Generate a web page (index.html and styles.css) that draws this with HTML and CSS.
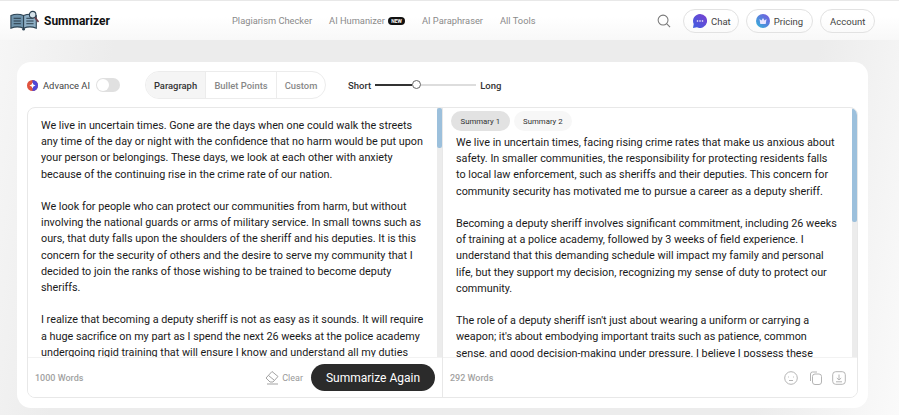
FILE: index.html
```html
<!DOCTYPE html>
<html lang="en">
<head>
  <meta charset="UTF-8" />
  <title>Summarizer</title>
  <link rel="stylesheet" href="styles.css">
</head>
<body>
  <header class="topbar">
    <div class="brand">
      <svg class="brand-logo" width="29" height="22" viewBox="0 0 32 24">
        <path d="M1 6q7-3 14 0v14q-7-3-14 0z" fill="#6f93ab" stroke="#2c4252" stroke-width="1.2"/>
        <path d="M15 6q7-3 14 0v14q-7-3-14 0z" fill="#8fb0c6" stroke="#2c4252" stroke-width="1.2"/>
        <path d="M4 9h8M4 12h8M4 15h8M18 9h8M18 12h8M18 15h8" stroke="#22323e" stroke-width="1"/>
        <circle cx="25" cy="5" r="3.6" fill="#d5e2ea" stroke="#2c4252" stroke-width="1.2"/>
        <path d="M27.500 8l4 5" stroke="#6b3d4a" stroke-width="1.800"/>
        <circle cx="15" cy="21" r="1.500" fill="#2c4252"/>
      </svg>
      <span class="brand-name">Summarizer</span>
    </div>
    <nav class="nav">
      <a>Plagiarism Checker</a>
      <a>AI Humanizer <span class="new-badge">NEW</span></a>
      <a>AI Paraphraser</a>
      <a>All Tools</a>
    </nav>
    <div class="actions">
      <svg class="search" width="14" height="14" viewBox="0 0 15 15" fill="none" stroke="#777" stroke-width="1.100">
        <circle cx="6.500" cy="6.500" r="5.300"/>
        <path d="M10.500 10.500l3.500 3.500"/>
      </svg>
      <button class="pill pill-chat">
        <svg width="14" height="14" viewBox="0 0 14 14">
          <defs>
            <linearGradient id="chatFill" x1="1" y1="0" x2="0" y2="1">
              <stop offset="0" stop-color="#7a3fd0"/>
              <stop offset="1" stop-color="#3f5fe0"/>
            </linearGradient>
          </defs>
          <path d="M7 0a7 7 0 1 1-3 13.300L0 14l.7-4A7 7 0 0 1 7 0z" fill="url(#chatFill)"/>
          <circle cx="4.500" cy="7" r=".8" fill="#fff"/><circle cx="7" cy="7" r=".8" fill="#fff"/><circle cx="9.500" cy="7" r=".8" fill="#fff"/>
        </svg>
        Chat
      </button>
      <button class="pill">
        <svg width="14" height="14" viewBox="0 0 14 14">
          <defs>
            <linearGradient id="priceFill" x1="0" y1="1" x2="1" y2="0">
              <stop offset="0" stop-color="#2fb4d8"/>
              <stop offset="1" stop-color="#7a55e0"/>
            </linearGradient>
          </defs>
          <circle cx="7" cy="7" r="7" fill="url(#priceFill)"/>
          <path d="M3.500 5l2 1.500L7 4l1.500 2.500 2-1.500-.8 5H4.300z" fill="#e9e4ff"/>
        </svg>
        Pricing
      </button>
      <button class="pill">Account</button>
    </div>
  </header>

  <main class="page">
    <section class="card">
      <div class="toolbar">
        <div class="advance">
          <svg width="11" height="11" viewBox="0 0 11 11">
            <circle cx="5.500" cy="5.500" r="5.500" fill="#e0533f"/>
            <path d="M5.500 0a5.500 5.500 0 0 1 0 11z" fill="#4f46d8"/>
            <path d="M5.500 2.500l.9 2.100 2.100.9-2.100.9-.9 2.100-.9-2.100-2.100-.9 2.100-.9z" fill="#fff"/>
          </svg>
          <span>Advance AI</span>
          <span class="toggle"><span class="knob"></span></span>
        </div>
        <div class="modes">
          <span class="mode active">Paragraph</span>
          <span class="mode">Bullet Points</span>
          <span class="mode">Custom</span>
        </div>
        <div class="length">
          <span>Short</span>
          <span class="slider"><span class="slider-fill"></span><span class="slider-knob"></span></span>
          <span>Long</span>
        </div>
      </div>

      <div class="editor">
        <div class="pane pane-left">
          <div class="text">
            <p>We live in uncertain times. Gone are the days when one could walk the streets any time of the day or night with the confidence that no harm would be put upon your person or belongings. These days, we look at each other with anxiety because of the continuing rise in the crime rate of our nation.</p>
            <p>We look for people who can protect our communities from harm, but without involving the national guards or arms of military service. In small towns such as ours, that duty falls upon the shoulders of the sheriff and his deputies. It is this concern for the security of others and the desire to serve my community that I decided to join the ranks of those wishing to be trained to become deputy sheriffs.</p>
            <p>I realize that becoming a deputy sheriff is not as easy as it sounds. It will require a huge sacrifice on my part as I spend the next 26 weeks at the police academy undergoing rigid training that will ensure I know and understand all my duties</p>
          </div>
          <span class="scroll-track"><span class="scroll-thumb thumb-left"></span></span>
          <div class="pane-foot">
            <span class="count">1000 Words</span>
            <span class="clear">
              <svg width="15" height="15" viewBox="0 0 15 15" fill="none" stroke="#999" stroke-width=".9">
                <path d="M1 8l6-6.500 6 5-5 5.500H5z"/>
                <path d="M3.500 5.500l5.500 4.500M2 14h11"/>
              </svg>
              Clear
            </span>
            <button class="summarize">Summarize Again</button>
          </div>
        </div>
        <div class="pane pane-right">
          <div class="tabs">
            <span class="tab tab-on">Summary 1</span>
            <span class="tab">Summary 2</span>
          </div>
          <div class="text text-right">
            <p>We live in uncertain times, facing rising crime rates that make us anxious about safety. In smaller communities, the responsibility for protecting residents falls to local law enforcement, such as sheriffs and their deputies. This concern for community security has motivated me to pursue a career as a deputy sheriff.</p>
            <p>Becoming a deputy sheriff involves significant commitment, including 26 weeks of training at a police academy, followed by 3 weeks of field experience. I understand that this demanding schedule will impact my family and personal life, but they support my decision, recognizing my sense of duty to protect our community.</p>
            <p>The role of a deputy sheriff isn't just about wearing a uniform or carrying a weapon; it's about embodying important traits such as patience, common sense, and good decision-making under pressure. I believe I possess these</p>
          </div>
          <span class="scroll-track"><span class="scroll-thumb thumb-right"></span></span>
          <div class="pane-foot">
            <span class="count">292 Words</span>
            <span class="foot-icons">
              <svg width="14" height="14" viewBox="0 0 14 14" fill="none" stroke="#b4b4b4">
                <circle cx="7" cy="7" r="6.300"/>
                <path d="M4 6h.8M9.200 6h.8M5 9.500h4"/>
              </svg>
              <svg width="14" height="14" viewBox="0 0 14 14" fill="none" stroke="#b4b4b4">
                <path d="M2.500 10V3a2 2 0 0 1 2-2H9"/>
                <rect x="4.500" y="3" width="9" height="10.500" rx="2.500"/>
              </svg>
              <svg width="14" height="14" viewBox="0 0 14 14" fill="none" stroke="#b4b4b4">
                <rect x=".7" y=".7" width="12.600" height="12.600" rx="3"/>
                <path d="M7 3.500v5.500M4.800 7L7 9l2.200-2M4 10.800h6"/>
              </svg>
            </span>
          </div>
        </div>
      </div>
    </section>
  </main>
</body>
</html>
```

FILE: styles.css
```css
* { margin: 0; padding: 0; box-sizing: border-box; }

html, body { height: 100%; }

body {
  background: #fff;
  color: #1c1c1c;
  font-family: Roboto, "Liberation Sans", sans-serif;
  font-size: 10px;
  overflow: hidden;
}

button { font-family: inherit; background: none; cursor: pointer; }

.topbar {
  display: flex;
  align-items: center;
  height: 40px;
  padding-left: 10px;
  padding-top: 1px;
  background: linear-gradient(#fff 40%, #f8f8f8);
  border-top: 1px solid #e8e8e8;
}

.brand { display: flex; align-items: center; gap: 5px; width: 222px; }
.brand-logo { display: block; }
.brand-name { font-size: 12px; font-weight: 700; color: #111; }

.nav { display: flex; gap: 17px; width: 425px; margin-top: -1px; }
.nav a { color: #8a8a8a; font-size: 9.300px; }

.new-badge {
  display: inline-block;
  padding: 0 3px;
  margin-left: 1px;
  background: #111;
  color: #fff;
  border-radius: 6px;
  font-size: 5px;
  line-height: 8px;
  vertical-align: 1px;
  font-weight: 700;
}

.actions { display: flex; align-items: center; gap: 7px; }
.search { margin-right: 5px; }

.pill {
  display: flex;
  align-items: center;
  gap: 4px;
  height: 24px;
  padding: 0 9px;
  border: 1px solid #e2e2e2;
  border-radius: 12px;
  color: #444;
  font-size: 9.500px;
}
.pill-chat { padding-right: 7px; }

.page {
  height: 375px;
  padding: 22px 31px 7px 17px;
  background: linear-gradient(100deg, #f6f6f6, #ececec 12%, #ececec 85%, #fafafa);
}

.card {
  display: flex;
  flex-direction: column;
  height: 346px;
  padding: 0 10px 10px;
  background: #fff;
  border-radius: 14px;
}

.toolbar { display: flex; align-items: center; height: 45px; padding-top: 1px; }

.advance { display: flex; align-items: center; gap: 5px; width: 118px; color: #444; font-size: 9.400px; }

.toggle { display: block; width: 24px; height: 14px; margin-left: 1px; background: #e0e0e0; border-radius: 7px; padding: 1px; }
.knob { display: block; width: 12px; height: 12px; background: #fff; border-radius: 50%; }

.modes { display: flex; flex: none; height: 28px; width: 181px; border: 1px solid #ececec; border-radius: 14px; overflow: hidden; white-space: nowrap; }
.mode { display: flex; align-items: center; justify-content: center; color: #888; font-size: 9.400px; font-weight: 500; border-left: 1px solid #ececec; }
.mode:nth-child(1) { width: 59px; border-left: 0; }
.mode:nth-child(2) { width: 71px; }
.mode:nth-child(3) { width: 49px; }
.mode.active { background: #f5f5f5; color: #333; }

.length { display: flex; align-items: center; gap: 4px; margin-left: 22px; color: #333; font-size: 9.500px; font-weight: 500; }

.slider { position: relative; display: block; width: 101px; height: 2px; background: #ddd; }
.slider-fill { display: block; width: 37px; height: 2px; background: #333; }
.slider-knob { position: absolute; left: 37px; top: -4px; width: 9px; height: 9px; background: #fff; border: 1.500px solid #666; border-radius: 50%; }

.editor { display: flex; flex: 1; min-height: 0; border: 1px solid #e8e8e8; border-radius: 8px; overflow: hidden; }

.pane { position: relative; display: flex; flex-direction: column; min-width: 0; }
.pane-left { width: 415px; border-right: 1px solid #e8e8e8; }
.pane-right { flex: 1; }

.text { flex: 1; min-height: 0; overflow: hidden; padding: 10px 15px 0 13px; font-size: 10.800px; line-height: 16.200px; color: #1a1a1a; }
.text p { margin-bottom: 16.200px; }
.text-right { padding: 4px 20px 0 13px; }

.tabs { display: flex; gap: 4px; padding: 3px 0 0 8px; }
.tab { display: flex; align-items: center; height: 20px; padding: 0 9.500px; background: #f7f7f7; border-radius: 10px; font-size: 7.800px; color: #333; }
.tab-on { background: #e2e2e2; }

.scroll-track { position: absolute; top: 0; right: 0; bottom: 40px; width: 5px; background: #ececec; }
.scroll-thumb { display: block; width: 5px; background: #9cc0dc; border-radius: 2px; }
.thumb-left { height: 40px; }
.thumb-right { height: 114px; }

.pane-foot { display: flex; align-items: center; height: 40px; flex: none; padding: 0 7px 0 7px; background: #fff; border-top: 1px solid #f2f2f2; }

.count { color: #a2a2a2; font-size: 9px; font-weight: 500; }

.clear { display: flex; align-items: center; gap: 2px; margin-left: auto; margin-right: 8px; color: #999; font-size: 9px; }

.summarize { height: 27px; width: 124px; background: #2b2b2b; color: #fff; border: 0; border-radius: 14px; font-size: 12px; }

.foot-icons { display: flex; gap: 10px; margin-left: auto; margin-right: 4px; }
```
